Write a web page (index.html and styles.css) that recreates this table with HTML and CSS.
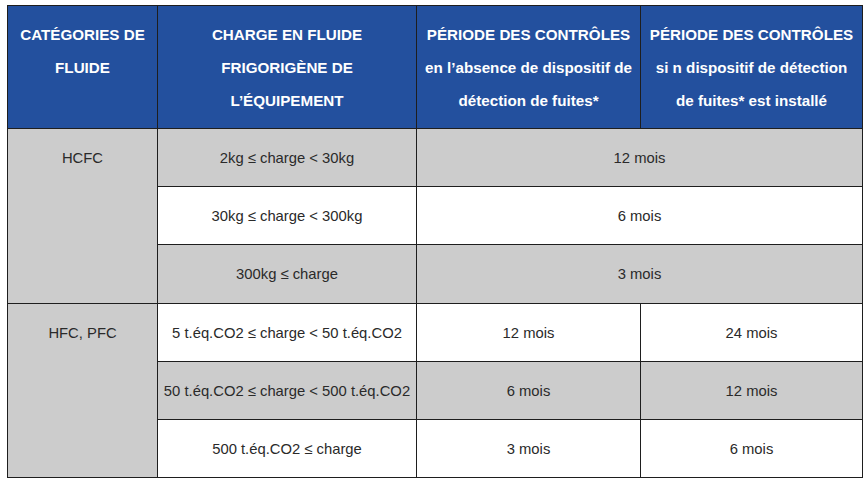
FILE: index.html
```html
<!DOCTYPE html>
<html lang="fr">
<head>
<meta charset="utf-8">
<link rel="stylesheet" href="styles.css">
</head>
<body>
<table class="grid">
  <colgroup>
    <col class="c1"><col class="c2"><col class="c3"><col class="c4">
  </colgroup>
  <thead>
    <tr>
      <th>CATÉGORIES DE<br>FLUIDE</th>
      <th>CHARGE EN FLUIDE<br>FRIGORIGÈNE DE<br>L’ÉQUIPEMENT</th>
      <th>PÉRIODE DES CONTRÔLES<br>en l’absence de dispositif de<br>détection de fuites*</th>
      <th>PÉRIODE DES CONTRÔLES<br>si n dispositif de détection<br>de fuites* est installé</th>
    </tr>
  </thead>
  <tbody>
    <tr>
      <td rowspan="3" class="gray">HCFC</td>
      <td class="gray">2kg ≤ charge &lt; 30kg</td>
      <td colspan="2" class="gray">12 mois</td>
    </tr>
    <tr>
      <td>30kg ≤ charge &lt; 300kg</td>
      <td colspan="2">6 mois</td>
    </tr>
    <tr class="tall">
      <td class="gray">300kg ≤ charge</td>
      <td colspan="2" class="gray">3 mois</td>
    </tr>
    <tr>
      <td rowspan="3" class="gray">HFC, PFC</td>
      <td>5 t.éq.CO2 ≤ charge &lt; 50 t.éq.CO2</td>
      <td>12 mois</td>
      <td>24 mois</td>
    </tr>
    <tr>
      <td class="gray">50 t.éq.CO2 ≤ charge &lt; 500 t.éq.CO2</td>
      <td class="gray">6 mois</td>
      <td class="gray">12 mois</td>
    </tr>
    <tr>
      <td>500 t.éq.CO2 ≤ charge</td>
      <td>3 mois</td>
      <td>6 mois</td>
    </tr>
  </tbody>
</table>
</body>
</html>
```
FILE: styles.css
```css
html, body {
  margin: 0;
  padding: 0;
  background: #ffffff;
}
body {
  padding: 5px 0 0 7px;
  font-family: "Liberation Sans", Arial, sans-serif;
  font-size: 14.8px;
  color: #2a2a2a;
}
.grid {
  border-collapse: collapse;
  table-layout: fixed;
  width: 855px;
}
.c1 { width: 150px; }
.c2 { width: 259px; }
.c3 { width: 224px; }
.c4 { width: 222px; }
.grid th,
.grid td {
  border: 1px solid #1e1e1e;
  text-align: center;
  vertical-align: top;
  line-height: 33px;
  padding: 0;
}
.grid th {
  background: #23509e;
  color: #ffffff;
  font-weight: bold;
  font-size: 15.2px;
  height: 123px;
  padding-top: 12px;
  box-sizing: border-box;
}
.grid td {
  height: 58px;
  padding-top: 13px;
  box-sizing: border-box;
  background: #ffffff;
}
.grid tr.tall td {
  height: 59px;
}
.grid td.gray {
  background: #cccccc;
}
```
